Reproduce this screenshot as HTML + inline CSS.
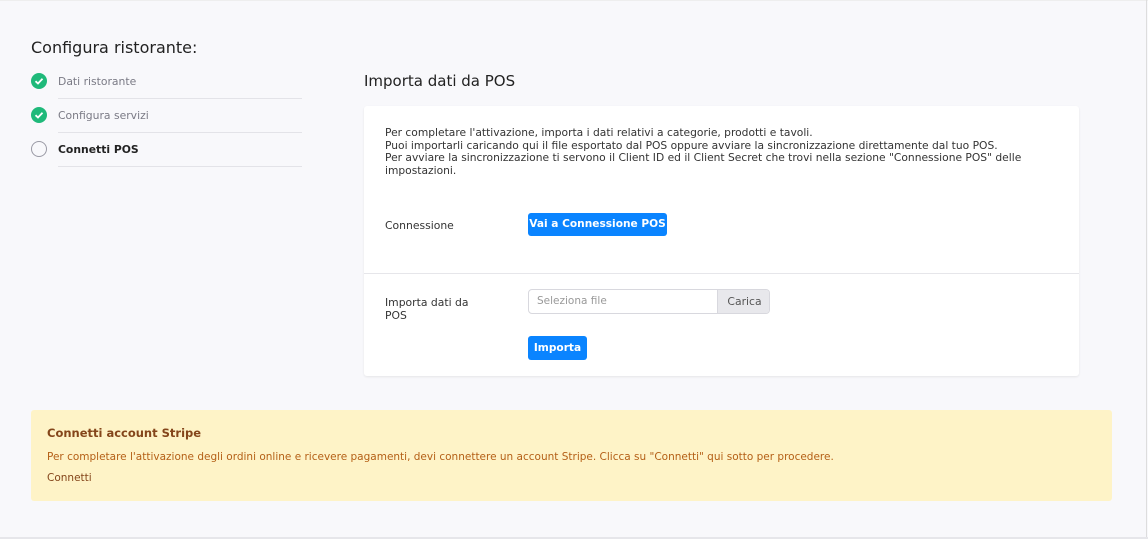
<!DOCTYPE html>
<html><head><meta charset="utf-8"><style>
*{margin:0;padding:0;box-sizing:border-box}
body{width:1148px;height:539px;background:#f8f8fb;font-family:"DejaVu Sans","Liberation Sans",sans-serif;position:relative;overflow:hidden;color:#333}
.a{position:absolute;white-space:nowrap}
.sep{position:absolute;left:58px;width:244px;height:1px;background:#e3e3e8}
.chk{position:absolute;left:31px;width:16px;height:16px;border-radius:50%;background:#1fb97a}
.chk svg{position:absolute;left:3px;top:3px}
.btn{position:absolute;background:#0a84ff;color:#fff;font-weight:bold;font-size:10.6px;border-radius:3px;text-align:center}
</style></head><body>
<div style="position:absolute;left:0;top:0;width:1148px;height:1px;background:#eee"></div>
<div style="position:absolute;right:1px;top:0;width:1px;height:539px;background:#ddd"></div>
<div style="position:absolute;left:0;bottom:0;width:1148px;height:2px;background:#e6e6ea"></div>
<div class="a" style="left:31px;top:38px;font-size:16px;color:#222">Configura ristorante:</div>
<div class="chk" style="top:73px"><svg width="10" height="10" viewBox="0 0 10 10"><path d="M1.5 5.2 L4 7.5 L8.5 2.8" stroke="#fff" stroke-width="1.8" fill="none"/></svg></div>
<div class="a" style="left:58px;top:75px;font-size:10.8px;color:#7a7a85">Dati ristorante</div>
<div class="sep" style="top:98px"></div>
<div class="chk" style="top:107px"><svg width="10" height="10" viewBox="0 0 10 10"><path d="M1.5 5.2 L4 7.5 L8.5 2.8" stroke="#fff" stroke-width="1.8" fill="none"/></svg></div>
<div class="a" style="left:58px;top:109px;font-size:10.8px;color:#7a7a85">Configura servizi</div>
<div class="sep" style="top:132px"></div>
<div style="position:absolute;left:31px;top:141px;width:16px;height:16px;border-radius:50%;border:1.3px solid #9a9aa5"></div>
<div class="a" style="left:58px;top:143px;font-size:10.8px;color:#222;font-weight:bold">Connetti POS</div>
<div class="sep" style="top:166px"></div>
<div class="a" style="left:364px;top:72px;font-size:15px;color:#222">Importa dati da POS</div>
<div style="position:absolute;left:364px;top:106px;width:715px;height:270px;background:#fff;border-radius:3px;box-shadow:0 1px 2px rgba(0,0,0,.08)"></div>
<div class="a" style="left:385px;top:127px;font-size:10.7px;line-height:12.5px;color:#333">Per completare l'attivazione, importa i dati relativi a categorie, prodotti e tavoli.<br>Puoi importarli caricando qui il file esportato dal POS oppure avviare la sincronizzazione direttamente dal tuo POS.<br>Per avviare la sincronizzazione ti servono il Client ID ed il Client Secret che trovi nella sezione "Connessione POS" delle<br>impostazioni.</div>
<div class="a" style="left:385px;top:219px;font-size:10.8px">Connessione</div>
<div class="btn" style="left:528px;top:213px;width:139px;height:23px;line-height:23px">Vai a Connessione POS</div>
<div style="position:absolute;left:364px;top:273px;width:715px;height:1px;background:#e6e6ea"></div>
<div class="a" style="left:385px;top:296px;font-size:10.8px;line-height:13px">Importa dati da<br>POS</div>
<div style="position:absolute;left:528px;top:289px;width:242px;height:25px;border:1px solid #d8d8de;border-radius:4px;overflow:hidden">
<div class="a" style="left:8px;top:5px;font-size:10.5px;color:#999">Seleziona file</div>
<div style="position:absolute;left:188px;top:0;width:54px;height:25px;background:#e8e8ec;border-left:1px solid #d8d8de;font-size:10.8px;color:#555;text-align:center;line-height:23px">Carica</div></div>
<div class="btn" style="left:528px;top:336px;width:59px;height:24px;line-height:24px">Importa</div>
<div style="position:absolute;left:31px;top:410px;width:1081px;height:91px;background:#fef3c7;border-radius:3px"></div>
<div class="a" style="left:47px;top:426px;font-size:11.5px;font-weight:bold;color:#84451a">Connetti account Stripe</div>
<div class="a" style="left:47px;top:451px;font-size:10.5px;color:#b45f16">Per completare l'attivazione degli ordini online e ricevere pagamenti, devi connettere un account Stripe. Clicca su "Connetti" qui sotto per procedere.</div>
<div class="a" style="left:47px;top:472px;font-size:10.5px;color:#84451a">Connetti</div>
</body></html>
